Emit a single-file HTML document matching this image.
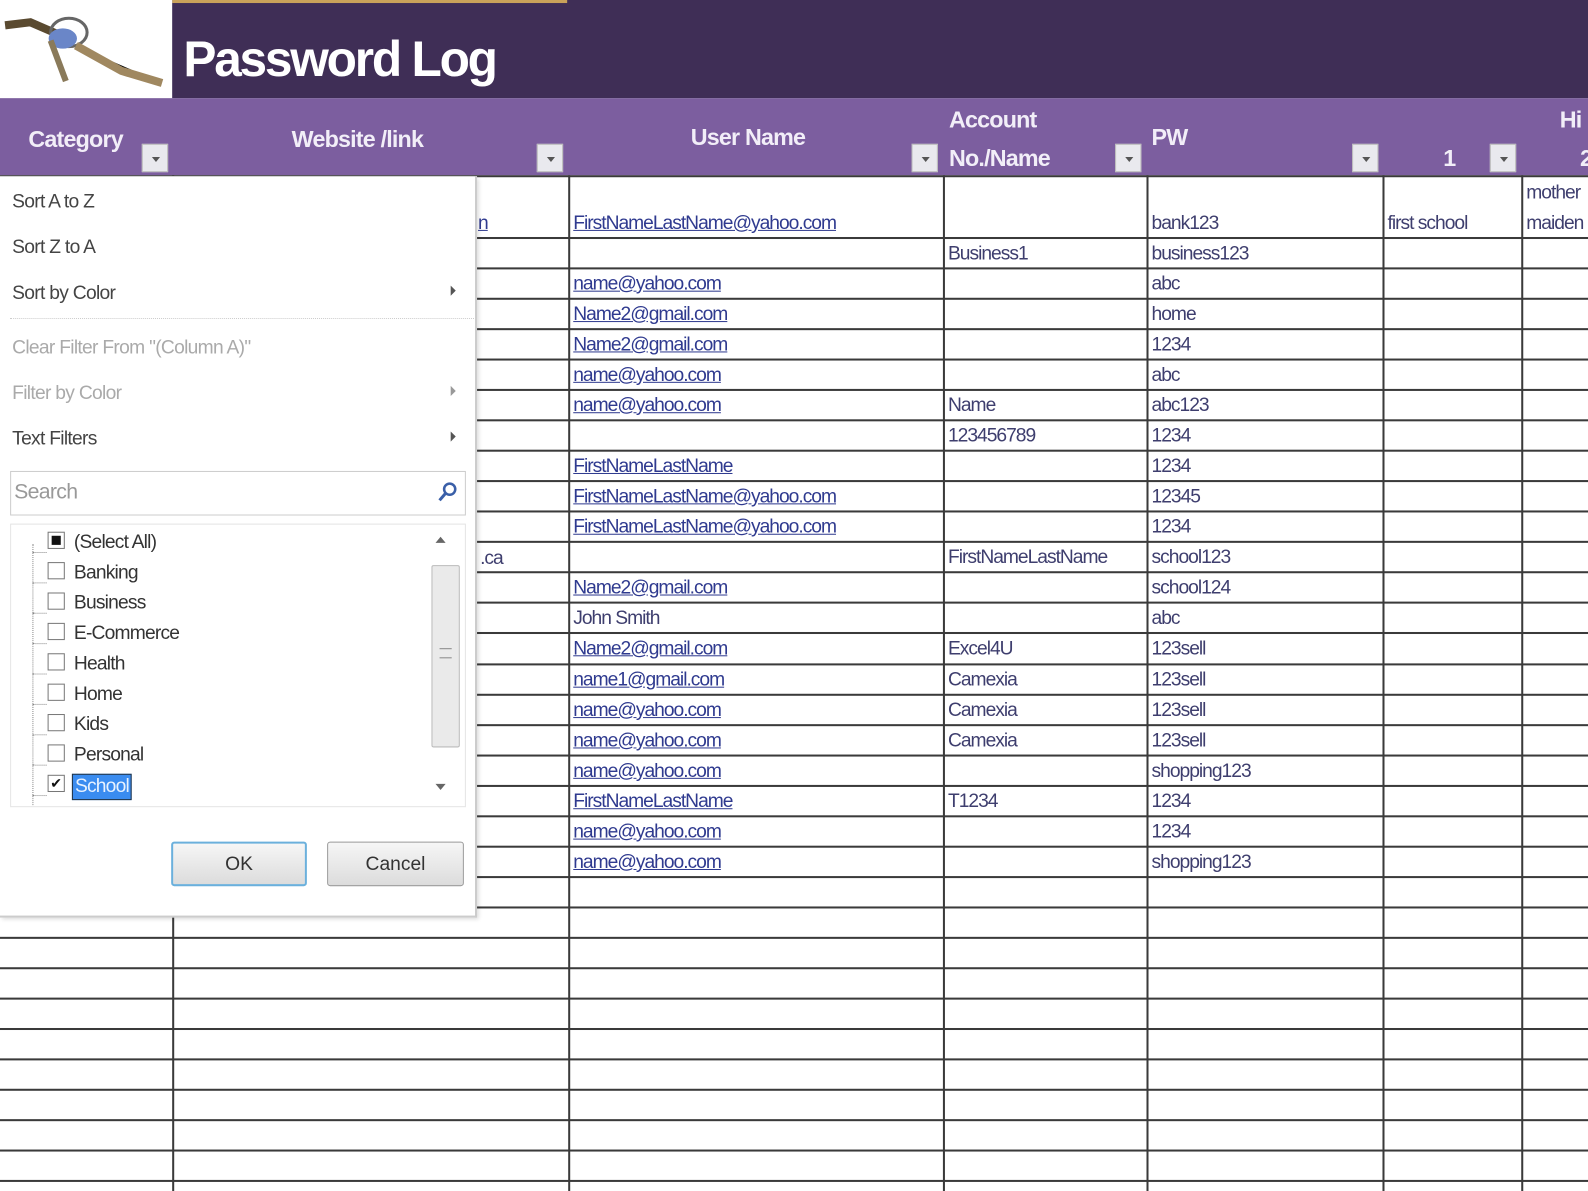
<!DOCTYPE html>
<html><head><meta charset="utf-8"><style>
html,body{margin:0;padding:0;width:1588px;height:1191px;overflow:hidden;background:#fff}
#w{position:absolute;left:0;top:0;width:1568px;height:1176px;transform:scale(1.0128);transform-origin:0 0;font-family:"Liberation Sans",sans-serif;overflow:hidden}
.a{position:absolute;white-space:nowrap}
.hl{position:absolute;left:0;width:1568px;height:2px;background:#3a3a3a}
.vl{position:absolute;top:173px;height:1003px;width:2px;background:#3a3a3a}
.c{position:absolute;font-size:19px;color:#3e3e6e;letter-spacing:-1px;white-space:nowrap;margin-top:2px}
.u{color:#2f3a8f;text-decoration:underline}
.dd{position:absolute;width:26px;height:28px;background:#e9e9ee;border:1px solid #bbb;box-sizing:border-box}
.dd:after{content:"";position:absolute;left:9px;top:12px;border-left:4px solid transparent;border-right:4px solid transparent;border-top:5px solid #555}
.h{position:absolute;color:#f2eef8;font-weight:bold;font-size:23px;white-space:nowrap;letter-spacing:-0.8px}
.m{position:absolute;left:12px;font-size:19px;color:#444;letter-spacing:-0.7px;margin-top:2px}
.g{color:#aaa}
.arr{position:absolute;left:445px;border-top:5px solid transparent;border-bottom:5px solid transparent;border-left:5px solid #555}
.cb{position:absolute;left:47px;width:17px;height:17px;border:1px solid #777;background:#fff;box-sizing:border-box}
.it{position:absolute;left:73px;font-size:19px;color:#333;letter-spacing:-0.8px;margin-top:2px}
.tr{position:absolute;left:32px;width:14px;border-top:1px dotted #888}
</style></head><body><div id="w">
<div class="a" style="left:0;top:0;width:1568px;height:97px;background:#3f2e56"></div>
<div class="a" style="left:170px;top:0;width:390px;height:3px;background:#c9a25a"></div>
<div class="a" style="left:0;top:0;width:170px;height:97px;background:#fff"></div>
<svg class="a" style="left:0;top:0" width="170" height="97" viewBox="0 0 170 97">
<path d="M5 25 L30 22 L60 35" stroke="#5a4a30" stroke-width="8" fill="none"/>
<ellipse cx="68" cy="32" rx="18" ry="14" fill="none" stroke="#666" stroke-width="3"/>
<ellipse cx="62" cy="38" rx="14" ry="10" fill="#6a86c8"/>
<path d="M50 40 L65 80" stroke="#8a7a5a" stroke-width="6"/>
<path d="M75 45 L120 70 L160 82" stroke="#a08860" stroke-width="8"/>
</svg>
<div class="a" style="left:181px;top:31px;font-size:49px;font-weight:bold;color:#fff;letter-spacing:-2.2px">Password Log</div>
<div class="a" style="left:0;top:97px;width:1568px;height:76px;background:#7c5e9f"></div>
<div class="h" style="left:28px;top:124px">Category</div>
<div class="h" style="left:288px;top:124px">Website /link</div>
<div class="h" style="left:682px;top:122px">User Name</div>
<div class="h" style="left:937px;top:105px">Account</div>
<div class="h" style="left:937px;top:143px">No./Name</div>
<div class="h" style="left:1137px;top:122px">PW</div>
<div class="h" style="left:1425px;top:143px">1</div>
<div class="h" style="left:1540px;top:105px">Hi</div>
<div class="h" style="left:1560px;top:143px">2</div>
<div class="dd" style="left:140px;top:142px"></div>
<div class="dd" style="left:530px;top:142px"></div>
<div class="dd" style="left:900px;top:142px"></div>
<div class="dd" style="left:1101px;top:142px"></div>
<div class="dd" style="left:1335px;top:142px"></div>
<div class="dd" style="left:1471px;top:142px"></div>
<div class="hl" style="top:173px"></div><div class="hl" style="top:234px"></div>
<div class="hl" style="top:264px"></div><div class="hl" style="top:294px"></div><div class="hl" style="top:324px"></div><div class="hl" style="top:354px"></div><div class="hl" style="top:384px"></div><div class="hl" style="top:414px"></div><div class="hl" style="top:444px"></div><div class="hl" style="top:474px"></div><div class="hl" style="top:504px"></div><div class="hl" style="top:534px"></div><div class="hl" style="top:564px"></div><div class="hl" style="top:594px"></div><div class="hl" style="top:624px"></div><div class="hl" style="top:655px"></div><div class="hl" style="top:685px"></div><div class="hl" style="top:715px"></div><div class="hl" style="top:745px"></div><div class="hl" style="top:775px"></div><div class="hl" style="top:805px"></div><div class="hl" style="top:835px"></div><div class="hl" style="top:865px"></div><div class="hl" style="top:895px"></div><div class="hl" style="top:925px"></div><div class="hl" style="top:955px"></div><div class="hl" style="top:985px"></div><div class="hl" style="top:1015px"></div><div class="hl" style="top:1045px"></div><div class="hl" style="top:1075px"></div><div class="hl" style="top:1105px"></div><div class="hl" style="top:1135px"></div><div class="hl" style="top:1165px"></div>
<div class="vl" style="left:170px"></div><div class="vl" style="left:561px"></div><div class="vl" style="left:931px"></div><div class="vl" style="left:1132px"></div><div class="vl" style="left:1365px"></div><div class="vl" style="left:1502px"></div>
<div class="c u" style="left:472px;top:208px">n</div>
<div class="c" style="left:474px;top:539px">.ca</div>
<div class="c u" style="left:566px;top:208px">FirstNameLastName@yahoo.com</div>
<div class="c" style="left:1137px;top:208px">bank123</div>
<div class="c" style="left:1370px;top:208px">first school</div>
<div class="c" style="left:1507px;top:178px">mother</div>
<div class="c" style="left:1507px;top:208px">maiden</div>
<div class="c" style="left:936px;top:238px">Business1</div><div class="c" style="left:1137px;top:238px">business123</div>
<div class="c u" style="left:566px;top:268px">name@yahoo.com</div><div class="c" style="left:1137px;top:268px">abc</div>
<div class="c u" style="left:566px;top:298px">Name2@gmail.com</div><div class="c" style="left:1137px;top:298px">home</div>
<div class="c u" style="left:566px;top:328px">Name2@gmail.com</div><div class="c" style="left:1137px;top:328px">1234</div>
<div class="c u" style="left:566px;top:358px">name@yahoo.com</div><div class="c" style="left:1137px;top:358px">abc</div>
<div class="c u" style="left:566px;top:388px">name@yahoo.com</div><div class="c" style="left:936px;top:388px">Name</div><div class="c" style="left:1137px;top:388px">abc123</div>
<div class="c" style="left:936px;top:418px">123456789</div><div class="c" style="left:1137px;top:418px">1234</div>
<div class="c u" style="left:566px;top:448px">FirstNameLastName</div><div class="c" style="left:1137px;top:448px">1234</div>
<div class="c u" style="left:566px;top:478px">FirstNameLastName@yahoo.com</div><div class="c" style="left:1137px;top:478px">12345</div>
<div class="c u" style="left:566px;top:508px">FirstNameLastName@yahoo.com</div><div class="c" style="left:1137px;top:508px">1234</div>
<div class="c" style="left:936px;top:538px">FirstNameLastName</div><div class="c" style="left:1137px;top:538px">school123</div>
<div class="c u" style="left:566px;top:568px">Name2@gmail.com</div><div class="c" style="left:1137px;top:568px">school124</div>
<div class="c" style="left:566px;top:598px">John Smith</div><div class="c" style="left:1137px;top:598px">abc</div>
<div class="c u" style="left:566px;top:628px">Name2@gmail.com</div><div class="c" style="left:936px;top:628px">Excel4U</div><div class="c" style="left:1137px;top:628px">123sell</div>
<div class="c u" style="left:566px;top:659px">name1@gmail.com</div><div class="c" style="left:936px;top:659px">Camexia</div><div class="c" style="left:1137px;top:659px">123sell</div>
<div class="c u" style="left:566px;top:689px">name@yahoo.com</div><div class="c" style="left:936px;top:689px">Camexia</div><div class="c" style="left:1137px;top:689px">123sell</div>
<div class="c u" style="left:566px;top:719px">name@yahoo.com</div><div class="c" style="left:936px;top:719px">Camexia</div><div class="c" style="left:1137px;top:719px">123sell</div>
<div class="c u" style="left:566px;top:749px">name@yahoo.com</div><div class="c" style="left:1137px;top:749px">shopping123</div>
<div class="c u" style="left:566px;top:779px">FirstNameLastName</div><div class="c" style="left:936px;top:779px">T1234</div><div class="c" style="left:1137px;top:779px">1234</div>
<div class="c u" style="left:566px;top:809px">name@yahoo.com</div><div class="c" style="left:1137px;top:809px">1234</div>
<div class="c u" style="left:566px;top:839px">name@yahoo.com</div><div class="c" style="left:1137px;top:839px">shopping123</div>
<div class="a" style="left:0;top:174px;width:469px;height:730px;background:#fff;border-right:2px solid #ccc;border-bottom:2px solid #ccc;box-shadow:2px 2px 4px rgba(0,0,0,.15)"></div>
<div class="m" style="top:187px">Sort A to Z</div>
<div class="m" style="top:232px">Sort Z to A</div>
<div class="m" style="top:277px">Sort by Color</div><div class="arr" style="top:282px"></div>
<div class="a" style="left:10px;top:314px;width:458px;border-top:1px dotted #ccc"></div>
<div class="m g" style="top:331px">Clear Filter From "(Column A)"</div>
<div class="m g" style="top:376px">Filter by Color</div><div class="arr" style="top:381px;border-left-color:#999"></div>
<div class="m" style="top:421px">Text Filters</div><div class="arr" style="top:426px"></div>
<div class="a" style="left:10px;top:465px;width:450px;height:44px;border:1px solid #ccc;box-sizing:border-box"></div>
<div class="a" style="left:14px;top:474px;font-size:21px;color:#999;letter-spacing:-0.7px">Search</div>
<svg class="a" style="left:430px;top:474px" width="24" height="24" viewBox="0 0 24 24"><circle cx="14" cy="9" r="5.5" fill="none" stroke="#3a5fa8" stroke-width="2.5"/><path d="M10 13 L4 20" stroke="#3a5fa8" stroke-width="3"/></svg>
<div class="a" style="left:10px;top:517px;width:450px;height:280px;border:1px solid #e4e4e4;box-sizing:border-box"></div>
<div class="a" style="left:32px;top:537px;height:258px;border-left:1px dotted #888"></div>
<div class="tr" style="top:545px"></div><div class="tr" style="top:575px"></div><div class="tr" style="top:605px"></div><div class="tr" style="top:635px"></div><div class="tr" style="top:665px"></div><div class="tr" style="top:695px"></div><div class="tr" style="top:725px"></div><div class="tr" style="top:755px"></div><div class="tr" style="top:785px"></div>
<div class="cb" style="top:525px"><div style="position:absolute;left:3px;top:3px;width:9px;height:9px;background:#111"></div></div>
<div class="cb" style="top:555px"></div><div class="cb" style="top:585px"></div><div class="cb" style="top:615px"></div><div class="cb" style="top:645px"></div><div class="cb" style="top:675px"></div><div class="cb" style="top:705px"></div><div class="cb" style="top:735px"></div>
<div class="cb" style="top:765px;font-size:14px;line-height:15px;text-align:center;color:#111">✔</div>
<div class="it" style="top:523px">(Select All)</div>
<div class="it" style="top:553px">Banking</div><div class="it" style="top:583px">Business</div><div class="it" style="top:613px">E-Commerce</div><div class="it" style="top:643px">Health</div><div class="it" style="top:673px">Home</div><div class="it" style="top:703px">Kids</div><div class="it" style="top:733px">Personal</div>
<div class="it" style="top:762px;left:71px;background:#3a8cf0;color:#e8f2ff;padding:1px 2px;border:1px solid #234">School</div>
<div class="a" style="left:430px;top:530px;border-left:5px solid transparent;border-right:5px solid transparent;border-bottom:6px solid #666"></div>
<div class="a" style="left:426px;top:558px;width:28px;height:180px;background:#eaeaea;border:1px solid #bbb;box-sizing:border-box;border-radius:2px"></div>
<div class="a" style="left:434px;top:640px;width:12px;height:8px;border-top:1px solid #888;border-bottom:1px solid #888"></div>
<div class="a" style="left:430px;top:774px;border-left:5px solid transparent;border-right:5px solid transparent;border-top:6px solid #666"></div>
<div class="a" style="left:169px;top:831px;width:134px;height:44px;border:2px solid #6bb0dc;border-radius:3px;background:linear-gradient(#f6f6f6,#dcdcdc);box-sizing:border-box;text-align:center;line-height:42px;font-size:19px;color:#333">OK</div>
<div class="a" style="left:323px;top:831px;width:135px;height:44px;border:1px solid #999;border-radius:3px;background:linear-gradient(#f6f6f6,#dcdcdc);box-sizing:border-box;text-align:center;line-height:44px;font-size:19px;color:#333">Cancel</div>
</div></body></html>
